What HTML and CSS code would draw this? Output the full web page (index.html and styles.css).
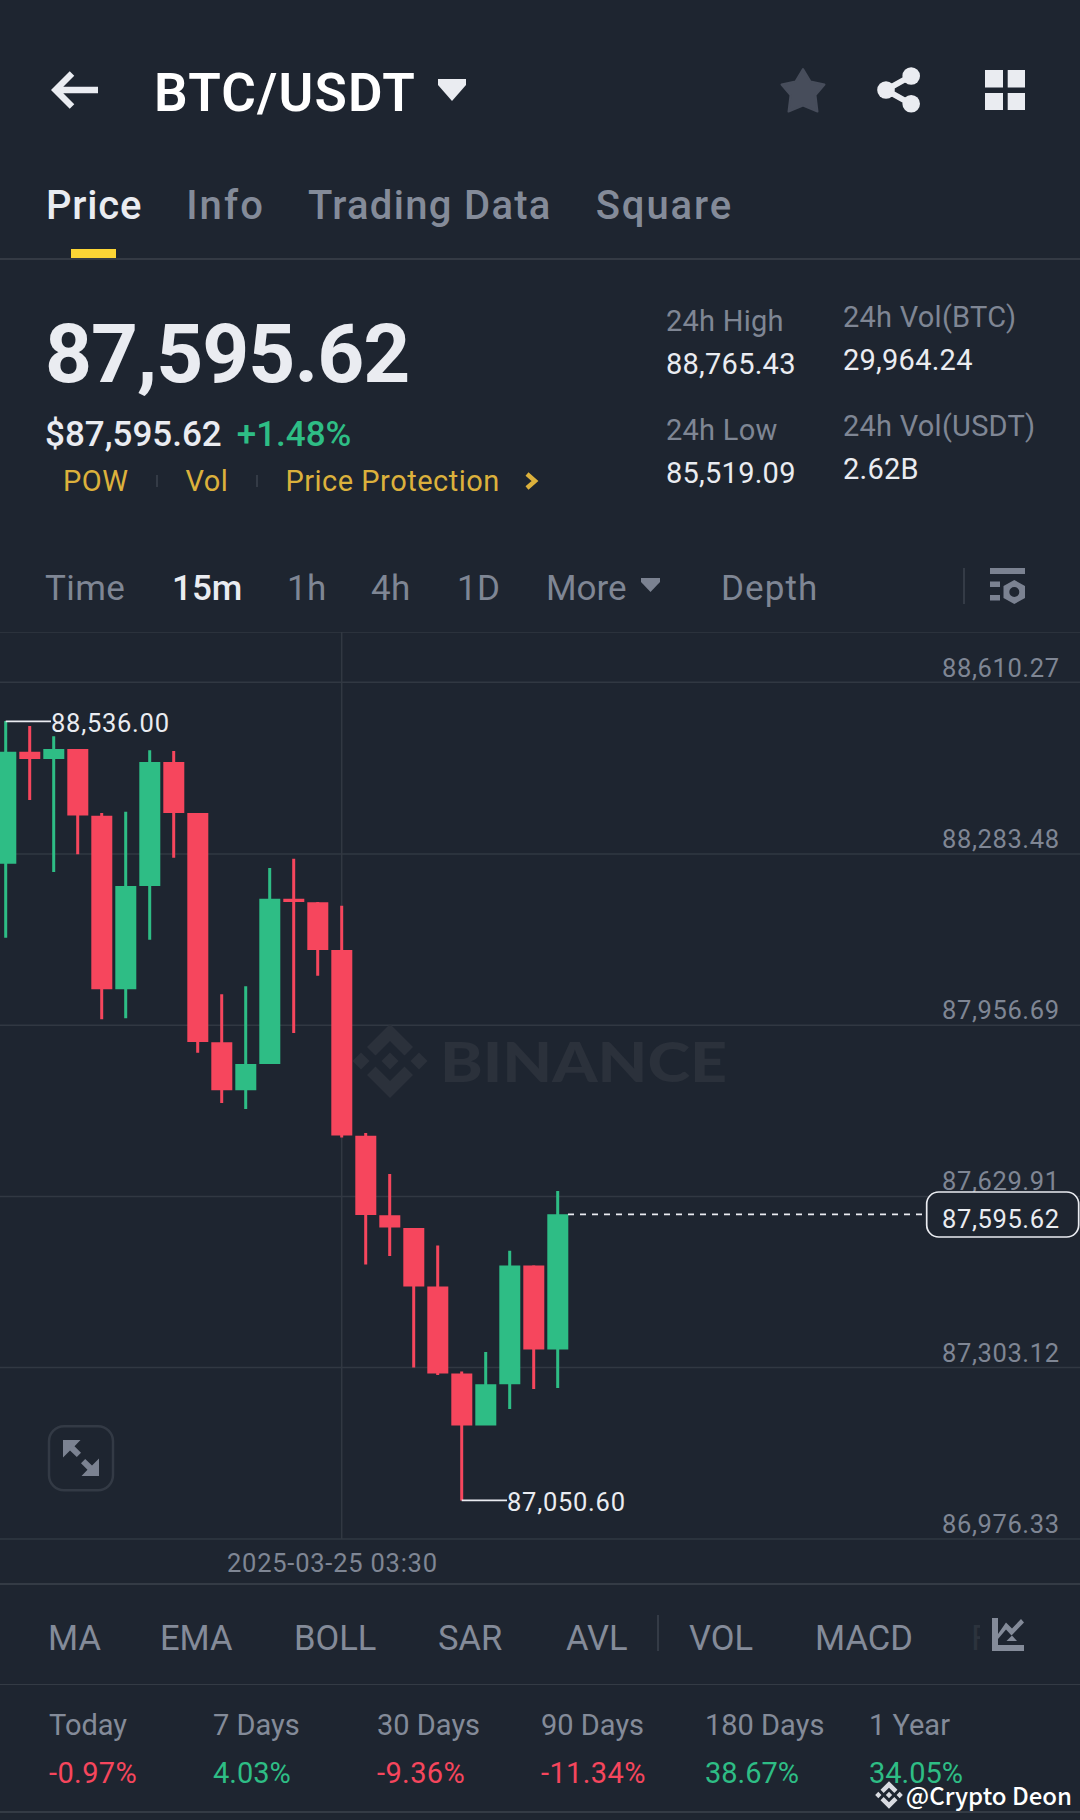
FILE: index.html
```html
<!DOCTYPE html>
<html lang="en">
<head>
<meta charset="utf-8">
<title>BTC/USDT</title>
<link rel="stylesheet" href="styles.css">
</head>
<body>
<main class="screen">
  <header class="header">
    <svg class="icon-back" width="48" height="38" viewBox="0 0 48 38"><path d="M21 2.5L4.5 19 21 35.500M4 19H47" fill="none" stroke="#eaecf1" stroke-width="6.4"/></svg>
    <h1 class="pair">BTC/USDT</h1>
    <svg class="icon-caret" width="28" height="22" viewBox="0 0 28 22"><path d="M0 0H28V6L14 22 0 6Z" fill="#eaecf1"/></svg>
    <svg class="icon-star" width="46" height="46" viewBox="0 0 46 46"><path d="M23 2L30.500 14.500 44.500 17.500 35.500 28 37.500 44.500 23 38.500 8.500 44.500 10.500 28 1.500 17.500 15.500 14.500Z" fill="#474d5b" stroke="#474d5b" stroke-width="2" stroke-linejoin="round"/></svg>
    <svg class="icon-share" width="44" height="46" viewBox="0 0 44 46"><path d="M34 9L9 23 34 37" fill="none" stroke="#eaecf1" stroke-width="6"/><circle cx="34.200" cy="9" r="8.800" fill="#eaecf1"/><circle cx="9" cy="23" r="8.800" fill="#eaecf1"/><circle cx="34.200" cy="36.700" r="8.800" fill="#eaecf1"/></svg>
    <svg class="icon-grid" width="40" height="40" viewBox="0 0 40 40"><path d="M0 0H18V17.500H0ZM22.700 0H40V17.500H22.700ZM0 23H18V40H0ZM22.700 23H40V40H22.700Z" fill="#eaecf1"/></svg>
  </header>

  <nav class="tabs">
    <span class="tab tab-active">Price</span>
    <span class="tab tab-info">Info</span>
    <span class="tab tab-data">Trading Data</span>
    <span class="tab tab-square">Square</span>
  </nav>

  <section class="summary">
    <div class="quote">
      <div class="last-price">87,595.62</div>
      <div class="fiat"><span class="fiat-price">$87,595.62</span><span class="up">+1.48%</span></div>
      <div class="tags">
        <span>POW</span><i class="tag-sep"></i><span>Vol</span><i class="tag-sep"></i><span>Price Protection</span>
        <svg width="14" height="18" viewBox="0 0 14 18"><path d="M2 2L10 9 2 16" fill="none" stroke="#dcb13c" stroke-width="4.500"/></svg>
      </div>
    </div>
    <dl class="stats">
      <dt>24h High</dt><dd>88,765.43</dd>
      <dt>24h Low</dt><dd>85,519.09</dd>
    </dl>
    <dl class="stats stats-vol">
      <dt>24h Vol(BTC)</dt><dd>29,964.24</dd>
      <dt>24h Vol(USDT)</dt><dd>2.62B</dd>
    </dl>
  </section>

  <nav class="intervals">
    <span>Time</span><span class="interval-active">15m</span><span>1h</span><span>4h</span><span>1D</span>
    <span class="more">More<svg width="19" height="14" viewBox="0 0 19 14"><path d="M0 0H19V4L9.500 14 0 4Z" fill="#7b8291"/></svg></span>
    <span class="depth">Depth</span>
    <i class="divider"></i>
    <svg class="icon-settings" width="35" height="37" viewBox="0 0 35 37"><path d="M0 0H35V6H0ZM0 13.500H10V19H0ZM0 27H10V32.500H0Z" fill="#7b8291"/><path fill-rule="evenodd" d="M24.300 12L35 18V30L24.300 36 13.500 30V18ZM24.300 19A5 5 0 1 0 24.300 29 5 5 0 1 0 24.300 19Z" fill="#7b8291"/></svg>
  </nav>

  <section class="chart">
    <svg width="1080" height="952" viewBox="0 632 1080 952">
      <g class="grid-lines">
        <path d="M0 682.300H1080M0 854H1080M0 1025.300H1080M0 1196.500H1080M0 1367.600H1080M0 1539H1080M341.700 632V1539"/>
      </g>
      <g class="brand">
        <path transform="translate(390 1061)" d="M0-37L23-14 14.500-5.500 0-20-14.500-5.500-23-14ZM0-8.500L8.500 0 0 8.500-8.500 0ZM29-8.500L37.500 0 29 8.500 20.500 0ZM-29-8.500L-20.500 0-29 8.500-37.500 0ZM0 37L23 14 14.500 5.500 0 20-14.500 5.500-23 14Z"/>
        <text x="440" y="1082" textLength="287" lengthAdjust="spacingAndGlyphs">BINANCE</text>
      </g>
      <g class="candle-up">
        <path d="M5.700 721V937.700M53.700 736.300V872M125.700 811.700V1018.300M149.700 750.300V939.700M245.700 986.300V1109M269.700 868V1064M485.700 1352V1425M509.700 1250.700V1409M557.700 1191V1388"/>
        <path class="body" d="M-4.700 751.700h21v112h-21zM43.300 749h21v10h-21zM115.300 886h21v103.300h-21zM139.300 762h21v124h-21zM235.300 1064h21v26.300h-21zM259.300 898.700h21v165.300h-21zM475.300 1384.300h21v41.200h-21zM499.300 1265.600h21v118.700h-21zM547.300 1214.300h21v135.300h-21z"/>
      </g>
      <g class="candle-down">
        <path d="M29.700 726V800M77.700 749V854.300M101.700 813V1019.300M173.700 751V857.700M197.700 813V1052.700M221.700 994.300V1103M293.700 858.700V1033M317.700 902V975.700M341.700 905.700V1137.500M365.700 1132.900V1264.600M389.700 1174V1256M413.700 1228V1367.500M437.700 1245.400V1375M461.700 1371.400V1500.400M533.700 1265.400V1389"/>
        <path class="body" d="M19.300 751.700h21v7.300h-21zM67.300 749h21v66.400h-21zM91.300 815.700h21v173.600h-21zM163.300 762h21v51h-21zM187.300 813h21v229h-21zM211.300 1042.300h21v48h-21zM283.300 898.700h21v3.300h-21zM307.300 902.300h21v47.700h-21zM331.300 950h21v185.500h-21zM355.300 1135.700h21v79.300h-21zM379.300 1215.300h21v12.200h-21zM403.300 1228h21v58.500h-21zM427.300 1286.500h21v87.100h-21zM451.300 1373.600h21v51.900h-21zM523.300 1265.400h21v84.200h-21z"/>
      </g>
      <g class="marks">
        <path d="M5.700 721.300H51M461.700 1500.400H507"/>
        <path d="M568 1214.300H926" stroke-dasharray="6 6"/>
        <text x="51" y="731.700" textLength="118">88,536.00</text>
        <text x="507" y="1510.900" textLength="118">87,050.60</text>
      </g>
      <g class="axis">
        <text x="942" y="676.700" textLength="117">88,610.27</text>
        <text x="942" y="847.700" textLength="117">88,283.48</text>
        <text x="942" y="1018.900" textLength="117">87,956.69</text>
        <text x="942" y="1190" textLength="117">87,629.91</text>
        <text x="942" y="1361.700" textLength="117">87,303.12</text>
        <text x="942" y="1532.900" textLength="117">86,976.33</text>
        <text x="227" y="1571.700" textLength="210">2025-03-25 03:30</text>
      </g>
      <g class="price-tag">
        <rect x="926.700" y="1192" width="152" height="45" rx="12"/>
        <text x="942" y="1228" textLength="117">87,595.62</text>
      </g>
      <g class="expand">
        <rect x="49" y="1426.200" width="64" height="64" rx="15"/>
        <path d="M63 1440H80.500L74.500 1446.200 81 1452.800 76.800 1457 70 1450.500 63 1457.500ZM99 1476H81.500L87.500 1469.800 81 1463.200 85.200 1459 92 1465.500 99 1458.500Z"/>
      </g>
    </svg>
  </section>

  <nav class="indicators">
    <span>MA</span><span>EMA</span><span>BOLL</span><span>SAR</span><span>AVL</span>
    <i class="divider"></i>
    <span>VOL</span><span>MACD</span><span class="clipped">F</span>
    <svg width="33" height="33" viewBox="0 0 33 33"><path d="M0 0H6V16L14 4.500 20 10.500 29 1 32 4.500 19.500 17.500 14 11.500 6 21V27H32V33H0Z" fill="#848b99"/><path d="M20 17.500L25 23H14.500Z" fill="#848b99"/></svg>
  </nav>

  <section class="performance">
    <div><span>Today</span><b class="down">-0.97%</b></div>
    <div><span>7 Days</span><b class="up">4.03%</b></div>
    <div><span>30 Days</span><b class="down">-9.36%</b></div>
    <div><span>90 Days</span><b class="down">-11.34%</b></div>
    <div><span>180 Days</span><b class="up">38.67%</b></div>
    <div><span>1 Year</span><b class="up">34.05%</b></div>
  </section>

  <div class="credit">
    <svg width="28" height="28" viewBox="-38 -38 76 76"><path d="M0-37L23-14 14.500-5.500 0-20-14.500-5.500-23-14ZM0-8.500L8.500 0 0 8.500-8.500 0ZM29-8.500L37.500 0 29 8.500 20.500 0ZM-29-8.500L-20.500 0-29 8.500-37.500 0ZM0 37L23 14 14.500 5.500 0 20-14.500 5.500-23 14Z" fill="#d9dbe1"/></svg>
    <span>@Crypto Deon</span>
  </div>
</main>
</body>
</html>
```
FILE: styles.css
```css
* { box-sizing: border-box; }

body {
  margin: 0;
  background: #1e2530;
  color: #eaecf1;
  font-family: Roboto, "Liberation Sans", sans-serif;
}

.screen {
  position: relative;
  width: 1080px;
  height: 1820px;
  overflow: hidden;
}

svg { display: block; }

/* Header */
.header {
  display: flex;
  align-items: center;
  height: 180px;
  padding-left: 51px;
}
.pair {
  width: 284px;
  margin: 0 0 0 54px;
  padding: 6px 0 0 1px;
  font-size: 53px;
  font-weight: 600;
  line-height: 60px;
  letter-spacing: 1.2px;
  color: #fff;
  white-space: nowrap;
}
.icon-caret { margin-left: 1px; }
.icon-star { margin-left: 314px; }
.icon-share { margin-left: 51px; }
.icon-grid { margin-left: 64px; }

/* Tabs */
.tabs {
  display: flex;
  height: 80px;
  padding-left: 46px;
  border-bottom: 2px solid #343a44;
  font-size: 40px;
  font-weight: 500;
  line-height: 52px;
  color: #848b99;
  white-space: nowrap;
}
.tab { position: relative; margin-right: 44px; letter-spacing: .8px; }
.tab-info { margin-right: 43px; letter-spacing: 2.100px; }
.tab-data { letter-spacing: 1.300px; }
.tab-square { letter-spacing: 1.900px; }
.tab-active { color: #eaecf1; }
.tab-active::after {
  content: "";
  position: absolute;
  left: 25px;
  bottom: 0;
  width: 45px;
  height: 9px;
  background: #fcd535;
}

/* Price summary */
.summary {
  display: grid;
  grid-template-columns: 620px 177px 1fr;
  height: 284px;
  padding-left: 46px;
  white-space: nowrap;
}
.quote { padding-top: 49px; }
.last-price {
  margin-left: -1px;
  font-size: 82px;
  font-weight: 700;
  line-height: 90px;
  letter-spacing: -1px;
}
.fiat {
  display: flex;
  gap: 15px;
  margin: 13px 0 0 -1px;
  font-size: 35px;
  font-weight: 500;
  line-height: 46px;
}
.tags {
  display: flex;
  align-items: center;
  margin: 3px 0 0 17px;
  font-size: 29px;
  line-height: 40px;
  letter-spacing: .5px;
  color: #dcb13c;
}
.tag-sep { width: 2px; height: 12px; margin: 0 27.500px; background: #343b46; }
.tags svg { margin-left: 25px; }
.stats {
  margin: 0;
  padding-top: 39.500px;
  font-size: 29px;
  line-height: 43px;
  letter-spacing: .25px;
}
.stats-vol { padding-top: 35.500px; }
.stats dt { color: #7f8694; }
.stats dd { margin: 0 0 23.500px; }
.up { color: #2ebd85; }
.down { color: #f6465d; }

/* Intervals */
.intervals {
  display: grid;
  grid-template-columns: 127px 115px 84px 86px 89px 175px 242px 27px 35px;
  align-items: center;
  height: 88px;
  padding-left: 45px;
  font-size: 35px;
  letter-spacing: .4px;
  color: #7f8694;
}
.interval-active { font-weight: 500; letter-spacing: 0; color: #eaecf1; }
.more { display: flex; align-items: center; gap: 14px; letter-spacing: 0; }
.more svg { margin-top: -6px; }
.depth { letter-spacing: 1.100px; }
.divider { width: 2px; height: 36px; background: #343b46; }
.intervals .divider { margin-top: -5px; }
.icon-settings { margin-top: -4px; }

/* Chart */
.chart { height: 953px; border-bottom: 2px solid #343b45; box-shadow: inset 0 1px #2b323c; }
.grid-lines path { fill: none; stroke: #313842; stroke-width: 1.500; }
.brand { fill: #2b313b; font: 900 56px Lato, sans-serif; }
.candle-up path, .candle-down path { fill: none; stroke-width: 3; }
.candle-up path { stroke: #2ebd85; }
.candle-down path { stroke: #f6465d; }
.candle-up .body { fill: #2ebd85; stroke: none; }
.candle-down .body { fill: #f6465d; stroke: none; }
.marks path { fill: none; stroke: #eaecf1; stroke-width: 1.800; }
.marks text, .axis text, .price-tag text { font-size: 25.500px; fill: #eaecf1; }
.axis text { fill: #7f8694; }
.price-tag rect { fill: #1e2530; stroke: #eaecf1; stroke-width: 1.700; }
.expand rect { fill: none; stroke: #333a45; stroke-width: 2.500; }
.expand path { fill: #7b8291; }

/* Indicators */
.indicators {
  display: grid;
  grid-template-columns: 112px 134px 144px 128px 91px 32px 126px 156px 21px 33px;
  align-items: center;
  height: 100px;
  padding-left: 48px;
  border-bottom: 1px solid #343b45;
  font-size: 34.500px;
  color: #848b99;
}
.indicators span { padding-top: 6px; }
.indicators .divider { margin-top: -3px; }
.indicators .clipped { width: 9px; overflow: hidden; color: #2c333d; }

/* Performance */
.performance {
  display: grid;
  grid-template-columns: repeat(6, 164px);
  height: 128px;
  padding: 16px 0 0 49px;
  border-bottom: 2px solid #343b45;
  font-size: 29px;
  line-height: 48px;
  color: #848b99;
}
.performance span, .performance b { display: block; font-weight: 400; }
.performance .down { letter-spacing: .4px; }

/* Author credit laid over the bottom corner */
.credit {
  position: absolute;
  right: 8px;
  bottom: 8px;
  display: flex;
  align-items: center;
  gap: 3px;
  font: 500 24px/34px "Noto Sans CJK SC", sans-serif;
  color: #fff;
}
```
